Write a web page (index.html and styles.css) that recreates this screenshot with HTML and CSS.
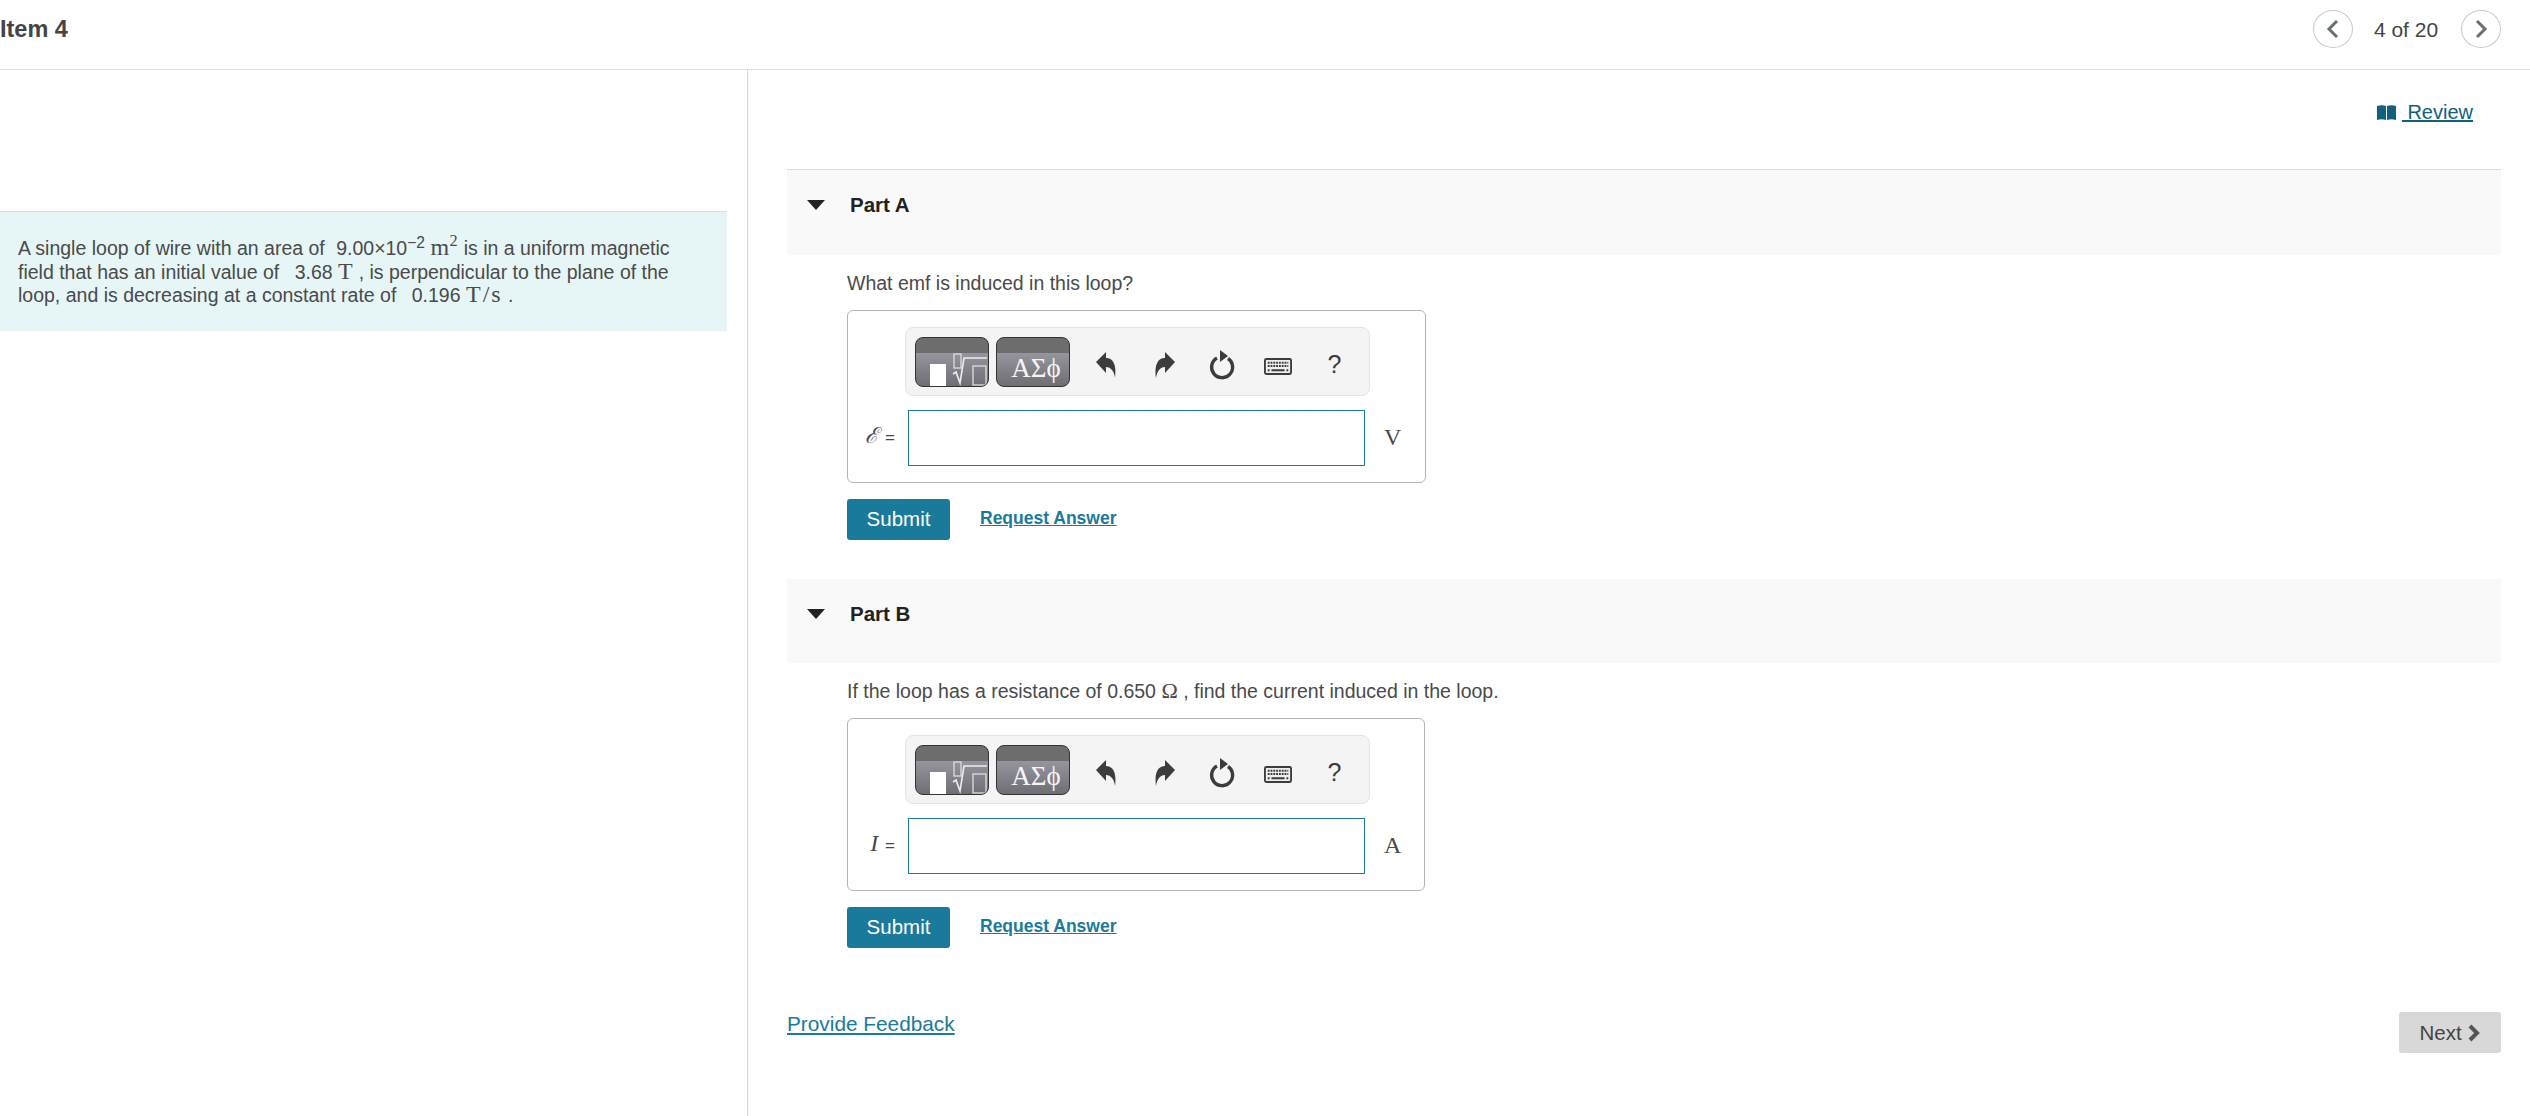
FILE: index.html
```html
<!DOCTYPE html>
<html>
	<head>
		<meta charset="UTF-8">
		<title>Item 4</title>
		<link rel="stylesheet" href="styles.css">
	</head>
	<body>
		<svg class="icon-defs" width="0" height="0">
			<symbol id="ico-templates" viewBox="0 0 74 50">
				<rect x="15" y="27" width="16" height="23" fill="#fff"/>
				<rect x="39" y="17" width="7" height="14" fill="none" stroke="#d8d8dc" stroke-width="1.4"/>
				<path d="M38 37 L41 35 L45 46 L49 21 H72" fill="none" stroke="#eee" stroke-width="1.6"/>
				<rect x="58" y="29" width="13" height="19" fill="none" stroke="#d8d8dc" stroke-width="1.4"/>
			</symbol>
			<symbol id="ico-undo" viewBox="0 0 22 28">
				<path d="M1 11 L11 1 V7 C17 7 22 12 20 27 C19 20 16 16 11 16 V22 Z" fill="#3c3c3c"/>
			</symbol>
			<symbol id="ico-redo" viewBox="0 0 22 28">
				<path d="M21 11 L11 1 V7 C5 7 0 12 2 27 C3 20 6 16 11 16 V22 Z" fill="#3c3c3c"/>
			</symbol>
			<symbol id="ico-reset" viewBox="0 0 26 30">
				<path d="M19 8.500 A10.500 10.500 0 1 1 8 8" fill="none" stroke="#3c3c3c" stroke-width="3.400"/>
				<path d="M11 0 L19 6 L11 12 Z" fill="#3c3c3c"/>
			</symbol>
			<symbol id="ico-keys" viewBox="0 0 30 18">
				<rect x="1" y="1" width="28" height="16" rx="1.500" fill="#eee" stroke="#3c3c3c" stroke-width="2"/>
				<path d="M4 5 H26 M4 8.500 H26" stroke="#3c3c3c" stroke-width="2" stroke-dasharray="2 1"/>
				<path d="M4 13 H6 M8 13 H22 M24 13 H26" stroke="#3c3c3c" stroke-width="2"/>
			</symbol>
		</svg>

		<header class="topbar">
			<h1 class="item-title">Item 4</h1>
			<nav class="pager">
				<a href="javascript:;" class="pager-btn">
					<svg width="14" height="20" viewBox="0 0 14 20"><path d="M11 2 L3 10 L11 18" fill="none" stroke="#67716f" stroke-width="3"/></svg>
				</a>
				<span class="pager-text">4 of 20</span>
				<a href="javascript:;" class="pager-btn">
					<svg width="14" height="20" viewBox="0 0 14 20"><path d="M3 2 L11 10 L3 18" fill="none" stroke="#67716f" stroke-width="3"/></svg>
				</a>
			</nav>
		</header>

		<div class="layout">
			<aside class="intro-col">
				<div class="intro">
					A single loop of wire with an area of <span class="num">9.00×10<sup>−2</sup></span> <span class="unit">m<sup>2</sup></span> is in a uniform magnetic<br>
					field that has an initial value of <span class="num num-wide">3.68</span> <span class="unit">T</span> , is perpendicular to the plane of the<br>
					loop, and is decreasing at a constant rate of <span class="num num-wide">0.196</span> <span class="unit unit-frac">T/s</span> .
				</div>
			</aside>

			<main class="work-col">
				<div class="review-row">
					<a href="javascript:;" class="review">
						<svg width="19" height="15" viewBox="0 0 19 15"><path d="M0 1 C3 0 6 0 9 1 V15 C6 14 3 14 0 15 Z M10 1 C13 0 16 0 19 1 V15 C16 14 13 14 10 15 Z" fill="#12617a"/></svg>
						<span class="review-text">&nbsp;Review</span>
					</a>
				</div>

				<section class="part">
					<div class="part-head">
						<span class="caret"></span>
						<h2 class="part-title">Part A</h2>
					</div>
					<div class="part-body">
						<p class="question">What emf is induced in this loop?</p>
						<div class="answer">
							<div class="toolbar">
								<span class="tool-btn"><svg width="74" height="50"><use href="#ico-templates"/></svg></span>
								<span class="tool-btn tool-greek">ΑΣϕ</span>
								<span class="tool first"><svg width="22" height="28"><use href="#ico-undo"/></svg></span>
								<span class="tool"><svg width="22" height="28"><use href="#ico-redo"/></svg></span>
								<span class="tool"><svg width="26" height="30"><use href="#ico-reset"/></svg></span>
								<span class="tool tool-keys"><svg width="28" height="17"><use href="#ico-keys"/></svg></span>
								<span class="tool tool-help">?</span>
							</div>
							<div class="answer-row">
								<label class="answer-label"><span class="sym">ℰ</span> =</label>
								<input class="answer-input" type="text">
								<span class="answer-unit">V</span>
							</div>
						</div>
						<div class="actions">
							<a href="javascript:;" class="submit">Submit</a>
							<a href="javascript:;" class="request">Request Answer</a>
						</div>
					</div>
				</section>

				<section class="part">
					<div class="part-head part-head-plain">
						<span class="caret"></span>
						<h2 class="part-title">Part B</h2>
					</div>
					<div class="part-body">
						<p class="question">If the loop has a resistance of 0.650 <span class="unit">Ω</span> , find the current induced in the loop.</p>
						<div class="answer answer-b">
							<div class="toolbar">
								<span class="tool-btn"><svg width="74" height="50"><use href="#ico-templates"/></svg></span>
								<span class="tool-btn tool-greek">ΑΣϕ</span>
								<span class="tool first"><svg width="22" height="28"><use href="#ico-undo"/></svg></span>
								<span class="tool"><svg width="22" height="28"><use href="#ico-redo"/></svg></span>
								<span class="tool"><svg width="26" height="30"><use href="#ico-reset"/></svg></span>
								<span class="tool tool-keys"><svg width="28" height="17"><use href="#ico-keys"/></svg></span>
								<span class="tool tool-help">?</span>
							</div>
							<div class="answer-row">
								<label class="answer-label"><span class="sym sym-i">I</span> =</label>
								<input class="answer-input" type="text">
								<span class="answer-unit">A</span>
							</div>
						</div>
						<div class="actions">
							<a href="javascript:;" class="submit">Submit</a>
							<a href="javascript:;" class="request">Request Answer</a>
						</div>
					</div>
				</section>

				<footer class="work-foot">
					<a href="javascript:;" class="feedback">Provide Feedback</a>
					<a href="javascript:;" class="next">Next
						<svg width="14" height="20" viewBox="0 0 14 20"><path d="M3 3 L10 10 L3 17" fill="none" stroke="#555" stroke-width="4"/></svg>
					</a>
				</footer>
			</main>
		</div>
	</body>
</html>
```

FILE: styles.css
```css
* {
	box-sizing: border-box;
}
body {
	margin: 0;
	height: 1116px;
	overflow: hidden;
	display: flex;
	flex-direction: column;
	background-color: #fff;
	color: #4a4a4a;
	font-family: "Liberation Sans", Arial, sans-serif;
	font-size: 19.5px;
}
.icon-defs {
	position: absolute;
}
a {
	color: inherit;
}

/* top bar */
.topbar {
	height: 70px;
	flex-shrink: 0;
	display: flex;
	justify-content: space-between;
	align-items: flex-start;
	border-bottom: 1px solid #dcdcdc;
	padding-right: 29px;
}
.item-title {
	margin: 14px 0 0;
	font-size: 23.5px;
	line-height: 30px;
	color: #444;
}
.pager {
	display: flex;
	align-items: center;
	margin-top: 10px;
}
.pager-btn {
	width: 40px;
	height: 38px;
	border: 1px solid #c8c8c8;
	border-radius: 50%;
	display: flex;
	align-items: center;
	justify-content: center;
}
.pager-text {
	width: 108px;
	padding-top: 2px;
	padding-right: 2px;
	text-align: center;
	font-size: 21px;
	color: #444;
}

.layout {
	flex: 1;
	display: flex;
}

/* left column */
.intro-col {
	width: 748px;
	flex-shrink: 0;
	padding: 141px 20px 0 0;
	border-right: 1px solid #d4d4d4;
}
.intro {
	height: 120px;
	padding: 25px 0 0 18px;
	background-color: #e6f6f7;
	border-top: 1px solid #dcdfe0;
	line-height: 23.5px;
	white-space: nowrap;
}
.intro sup {
	font-size: 80%;
	line-height: 0;
}
.num {
	margin-left: 6px;
}
.num-wide {
	margin-left: 10px;
}
.unit {
	font-family: "Liberation Serif", "Times New Roman", serif;
	font-size: 24px;
	letter-spacing: 0.5px;
	line-height: 0;
}
.intro .unit sup {
	font-size: 68%;
}
.unit-frac {
	letter-spacing: 2px;
}
.question .unit {
	font-size: 22px;
	letter-spacing: 0;
}

/* right column */
.work-col {
	flex: 1;
	padding: 0 29px 0 39px;
}
.review-row {
	height: 99px;
	padding-top: 30px;
	display: flex;
	justify-content: flex-end;
}
.review {
	display: flex;
	align-items: center;
	align-self: flex-start;
	height: 24px;
	color: #12617a;
	font-size: 20px;
	margin-right: 28px;
	text-decoration: none;
}
.review-text {
	text-decoration: underline;
	margin-left: 6px;
}

.part {
	margin-bottom: 39px;
}
.part-head {
	height: 86px;
	padding: 21px 0 0 20px;
	display: flex;
	align-items: flex-start;
	background-color: #f9f9f9;
	border-top: 1px solid #dcdcdc;
}
.part-head-plain {
	height: 84px;
	padding-top: 20px;
	border-top-color: #f9f9f9;
}
.caret {
	width: 0;
	height: 0;
	margin-top: 9px;
	border-left: 9px solid transparent;
	border-right: 9px solid transparent;
	border-top: 10px solid #222;
}
.part-title {
	margin: 0 0 0 25px;
	font-size: 20.5px;
	line-height: 28px;
	color: #222;
}
.part-body {
	padding-left: 60px;
}
.question {
	margin: 16px 0 15px;
	line-height: 24px;
}

.answer {
	width: 579px;
	height: 173px;
	padding: 16px 0 0;
	border: 1px solid #b4b4b4;
	border-radius: 6px;
}
.answer-b {
	width: 578px;
}
.toolbar {
	width: 465px;
	height: 69px;
	margin-left: 57px;
	padding: 8px 9px;
	display: flex;
	align-items: center;
	gap: 7px;
	background-color: #f4f4f4;
	border: 1px solid #e4e4e4;
	border-radius: 8px;
}
.tool-btn {
	width: 74px;
	height: 50px;
	flex-shrink: 0;
	overflow: hidden;
	display: flex;
	align-items: flex-end;
	justify-content: center;
	border: 1px solid #333;
	border-radius: 8px;
	background: linear-gradient(#6d6d6d 15px, #96949e 15px, #6f6e73);
}
.tool-btn svg {
	margin: -1px;
}
.tool-greek {
	padding: 0 0 3px 6px;
	color: #f4f4f4;
	font-family: "Liberation Serif", "Times New Roman", serif;
	font-size: 27px;
	line-height: 30px;
}
.tool {
	width: 57px;
	margin-left: -7px;
	padding-top: 6px;
	flex-shrink: 0;
	display: flex;
	align-items: center;
	justify-content: center;
}
.tool.first {
	margin-left: 0;
}
.tool:nth-child(4) {
	margin-left: -5px;
}
.tool-keys {
	padding-top: 9px;
	margin-left: -8px;
}
.tool-help {
	padding-top: 5px;
	margin-left: -7px;
	font-size: 25px;
	color: #3c3c3c;
}

.answer-row {
	margin-top: 14px;
	display: flex;
	align-items: center;
}
.answer-label {
	width: 60px;
	padding-right: 13px;
	text-align: right;
	font-size: 17px;
	white-space: nowrap;
}
.sym {
	margin-right: 2px;
	font-family: "DejaVu Serif", "Liberation Serif", serif;
	font-style: italic;
	font-size: 22px;
	line-height: 0;
}
.sym-i {
	font-family: "Liberation Serif", serif;
	font-size: 24px;
}
.answer-input {
	width: 457px;
	height: 56px;
	border: 1px solid #1a7a9c;
	background-color: #fff;
}
.answer-unit {
	margin-left: 19px;
	padding-bottom: 2px;
	font-family: "Liberation Serif", "Times New Roman", serif;
	font-size: 24px;
}

.actions {
	margin-top: 16px;
	display: flex;
	align-items: flex-start;
}
.submit {
	width: 103px;
	height: 41px;
	background-color: #1a7a9c;
	border-radius: 3px;
	color: #fff;
	font-size: 20.5px;
	line-height: 39px;
	text-align: center;
	text-decoration: none;
}
.request {
	margin: 8px 0 0 30px;
	color: #1a7a9c;
	font-size: 17.5px;
	line-height: 22px;
	font-weight: bold;
}

.work-foot {
	margin-top: 64px;
	display: flex;
	justify-content: space-between;
	align-items: flex-start;
}
.feedback {
	color: #1a7a9c;
	font-size: 20.8px;
}
.next {
	width: 102px;
	height: 41px;
	display: flex;
	align-items: center;
	justify-content: center;
	gap: 5px;
	background-color: #d8d8d8;
	border-radius: 3px;
	color: #444;
	font-size: 20.5px;
	text-decoration: none;
}
```
